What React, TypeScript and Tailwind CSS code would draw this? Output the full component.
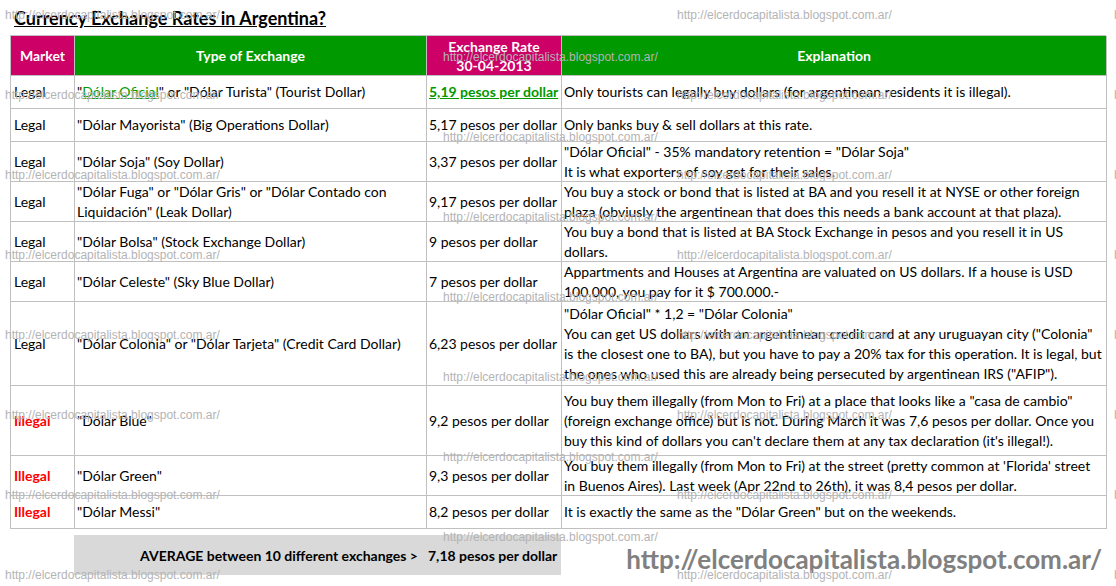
import React from "react";

const WM = "http://elcerdocapitalista.blogspot.com.ar/";

const marks: [number, number][] = [];
for (let k = 0; k < 8; k++) {
  const y = 15 + 80 * k;
  marks.push([5, y], [677, y], [1114, y]);
}
for (let k = 0; k < 7; k++) {
  marks.push([443, 57 + 80 * k]);
}

type Row = {
  h: string;
  market: "Legal" | "Illegal";
  type: React.ReactNode;
  rate: React.ReactNode;
  exp: string[];
};

const G = "text-[#009900]";

const rows: Row[] = [
  {
    h: "h-[33px]",
    market: "Legal",
    type: (
      <>
        "<span className={`${G} underline`}>Dólar Oficial</span>" or "Dólar Turista" (Tourist Dollar)
      </>
    ),
    rate: <span className={`${G} font-bold underline`}>5,19 pesos per dollar</span>,
    exp: ["Only tourists can legally buy dollars (for argentinean residents it is illegal)."],
  },
  {
    h: "h-[33px]",
    market: "Legal",
    type: <>"Dólar Mayorista" (Big Operations Dollar)</>,
    rate: "5,17 pesos per dollar",
    exp: ["Only banks buy & sell dollars at this rate."],
  },
  {
    h: "h-[40px]",
    market: "Legal",
    type: <>"Dólar Soja" (Soy Dollar)</>,
    rate: "3,37 pesos per dollar",
    exp: ['"Dólar Oficial" - 35% mandatory retention = "Dólar Soja"', "It is what exporters of soy get for their sales."],
  },
  {
    h: "h-[40px]",
    market: "Legal",
    type: (
      <>
        "Dólar Fuga" or "Dólar Gris" or "Dólar Contado con
        <br />
        Liquidación" (Leak Dollar)
      </>
    ),
    rate: "9,17 pesos per dollar",
    exp: [
      "You buy a stock or bond that is listed at BA and you resell it at NYSE or other foreign",
      "plaza (obviusly the argentinean that does this needs a bank account at that plaza).",
    ],
  },
  {
    h: "h-[40px]",
    market: "Legal",
    type: <>"Dólar Bolsa" (Stock Exchange Dollar)</>,
    rate: "9 pesos per dollar",
    exp: ["You buy a bond that is listed at BA Stock Exchange in pesos and you resell it in US", "dollars."],
  },
  {
    h: "h-[40px]",
    market: "Legal",
    type: <>"Dólar Celeste" (Sky Blue Dollar)</>,
    rate: "7 pesos per dollar",
    exp: [
      "Appartments and Houses at Argentina are valuated on US dollars. If a house is USD",
      "100.000, you pay for it $ 700.000.-",
    ],
  },
  {
    h: "h-[84px]",
    market: "Legal",
    type: <>"Dólar Colonia" or "Dólar Tarjeta" (Credit Card Dollar)</>,
    rate: "6,23 pesos per dollar",
    exp: [
      '"Dólar Oficial" * 1,2 = "Dólar Colonia"',
      'You can get US dollars with an argentinean credit card at any uruguayan city ("Colonia"',
      "is the closest one to BA), but you have to pay a 20% tax for this operation. It is legal, but",
      'the ones who used this are already being persecuted by argentinean IRS ("AFIP").',
    ],
  },
  {
    h: "h-[70px]",
    market: "Illegal",
    type: <>"Dólar Blue"</>,
    rate: "9,2 pesos per dollar",
    exp: [
      'You buy them illegally (from Mon to Fri) at a place that looks like a "casa de cambio"',
      "(foreign exchange office) but is not. During March it was 7,6 pesos per dollar. Once you",
      "buy this kind of dollars you can't declare them at any tax declaration (it's illegal!).",
    ],
  },
  {
    h: "h-[40px]",
    market: "Illegal",
    type: <>"Dólar Green"</>,
    rate: "9,3 pesos per dollar",
    exp: [
      "You buy them illegally (from Mon to Fri) at the street (pretty common at 'Florida' street",
      "in Buenos Aires). Last week (Apr 22nd to 26th), it was 8,4 pesos per dollar.",
    ],
  },
  {
    h: "h-[33px]",
    market: "Illegal",
    type: <>"Dólar Messi"</>,
    rate: "8,2 pesos per dollar",
    exp: ['It is exactly the same as the "Dólar Green" but on the weekends.'],
  },
];

const cols = "grid grid-cols-[64px_352px_135px_545px]";
const cell = "flex items-center border-r border-b border-[#c0c0c0] pl-[2px] whitespace-nowrap overflow-hidden";

export default function App() {
  return (
    <div
      className="relative w-[1116px] h-[586px] overflow-hidden bg-white text-black"
      style={{ fontFamily: "Lato, 'Open Sans', sans-serif" }}
    >
      <div className="pl-[10px]">
        <div className="h-[35px] pl-[4px] pt-[6px]">
          <span className="text-[18px] font-bold underline leading-[24px]">Currency Exchange Rates in Argentina?</span>
        </div>
        <div className="w-[1096px] border-t border-l border-[#c0c0c0] text-[14px] leading-[20px]">
          <div className={`${cols} h-[40px] text-white font-bold`}>
            <div className="flex items-center justify-center border-r border-b border-[#c0c0c0] bg-[#cc0066]">Market</div>
            <div className="flex items-center justify-center border-r border-b border-[#c0c0c0] bg-[#009900]">Type of Exchange</div>
            <div className="flex flex-col items-center justify-center border-r border-b border-[#c0c0c0] bg-[#cc0066] leading-[19px]">
              <span>Exchange Rate</span>
              <span>30-04-2013</span>
            </div>
            <div className="flex items-center justify-center border-r border-b border-[#c0c0c0] bg-[#009900]">Explanation</div>
          </div>
          {rows.map((r, i) => (
            <div key={i} className={`${cols} ${r.h}`}>
              <div className={`${cell} pl-[3px] ${r.market === "Illegal" ? "text-[#ff0000] font-bold" : ""}`}>{r.market}</div>
              <div className={cell}>
                <div>{r.type}</div>
              </div>
              <div className={cell}>{r.rate}</div>
              <div className={cell}>
                <div className="flex flex-col">
                  {r.exp.map((l, j) => (
                    <span key={j}>{l}</span>
                  ))}
                </div>
              </div>
            </div>
          ))}
        </div>
        <div className="flex items-center mt-[6px]">
          <div className="w-[64px]" />
          <div className="flex w-[487px] h-[40px] items-center bg-[#d9d9d9] text-[14px] font-bold">
            <div className="w-[352px] text-right pr-[8px]">AVERAGE between 10 different exchanges &gt;</div>
            <div className="pl-[2px]">7,18 pesos per dollar</div>
          </div>
          <div className="flex-1 text-right pr-[14px] text-[26px] font-bold text-[#808080] leading-[30px] mt-[8px]">
            http://elcerdocapitalista.blogspot.com.ar/
          </div>
        </div>
      </div>
      {marks.map(([x, y], i) => (
        <span
          key={i}
          className="pointer-events-none absolute whitespace-nowrap text-[12px] leading-[14px] text-[#b4b4b4]"
          style={{ left: x, top: y - 7, fontFamily: "'Liberation Sans', Arial, sans-serif" }}
        >
          {WM}
        </span>
      ))}
    </div>
  );
}
